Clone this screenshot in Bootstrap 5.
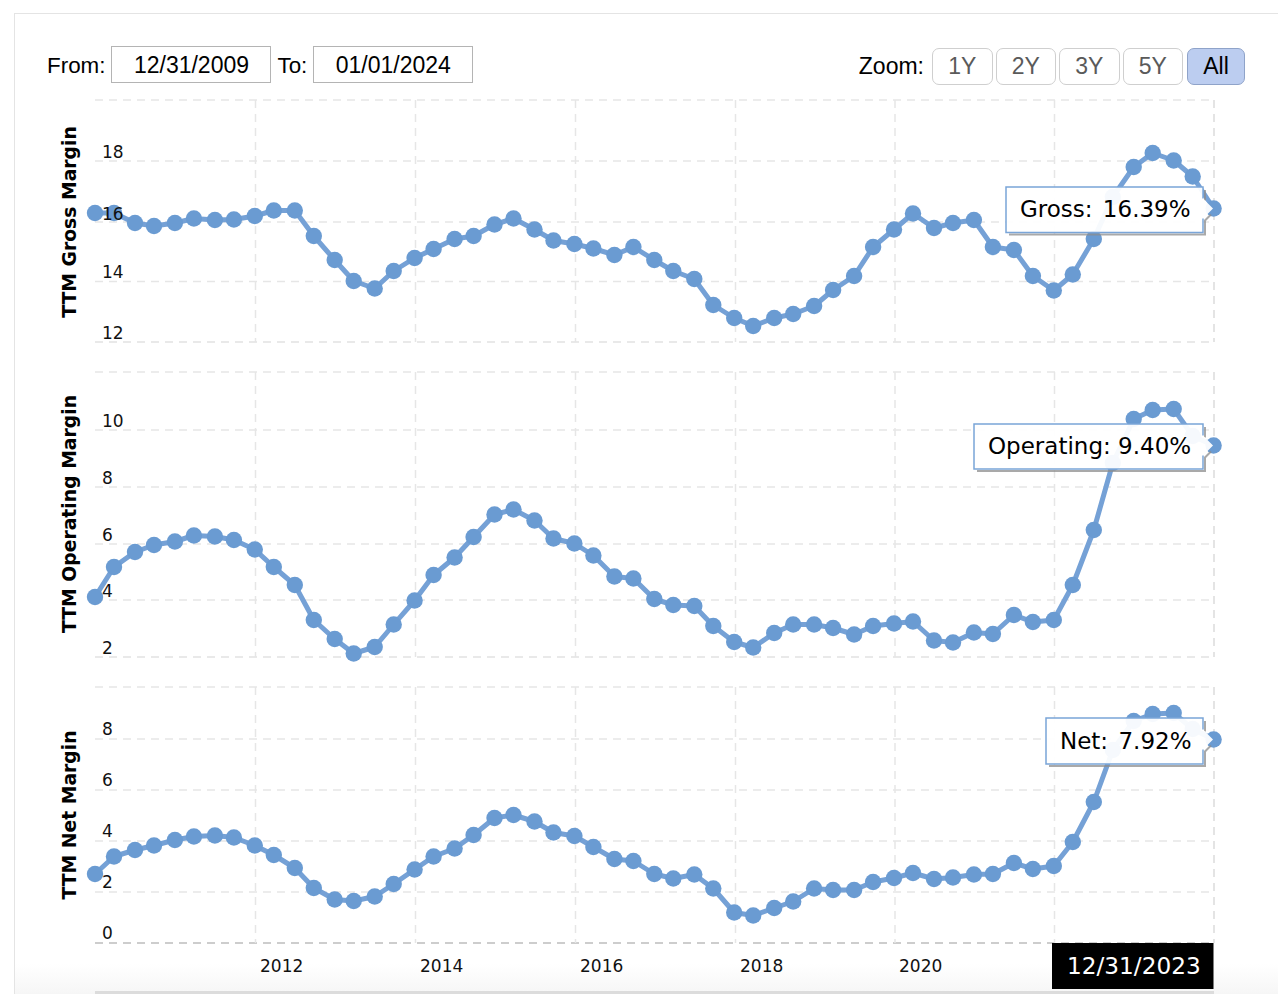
<!DOCTYPE html>
<html lang="en">
<head>
<meta charset="utf-8">
<title>TTM Margins</title>
<link href="https://cdn.jsdelivr.net/npm/bootstrap@5.3.0/dist/css/bootstrap.min.css" rel="stylesheet">
<style>
html, body { height: 994px; overflow: hidden; background: #fff; }
.frame-box { margin: 13px 0 0 14px; border-top: 1px solid #e4e4e4; border-left: 1px solid #e4e4e4; }
.range-bar { padding: 32px 33px 0 32px; height: 74px; font-family: "Liberation Sans", Arial, sans-serif; font-size: 22.4px; color: #000; line-height: 1; }
.range-group { gap: 6px; }
.range-group label { padding-top: 3px; }
.range-input.form-control { width: 160px; height: 37px; padding: 2px 0 0; border: 1px solid #b4b4b4; border-radius: 0; text-align: center; font-size: 23px; color: #000; box-shadow: none; }
.zoom-group { gap: 3px; padding-top: 2px; }
.zoom-label { margin-right: 5px; font-size: 23px; }
.zoom-btn.btn { width: 60.5px; height: 37px; padding: 0; border: 1px solid #cfcfcf; border-radius: 7px; font-size: 23px; line-height: 1; color: #5a5a5a; background: #fff; }
.zoom-btn.btn.active { width: 58px; background: #bccdf0; border-color: #8fa3c9; color: #000; margin-left: 1px; }
.chart-svg { display: block; }
.ax { font-family: "DejaVu Sans", sans-serif; font-size: 17px; fill: #111; }
.ax-title { font-family: "DejaVu Sans", sans-serif; font-size: 18.8px; font-weight: 700; fill: #000; }
.tip-text { font-family: "DejaVu Sans", sans-serif; font-size: 23px; fill: #000; }
.tag-text { font-family: "DejaVu Sans", sans-serif; font-size: 23.2px; fill: #fff; }
</style>
</head>
<body>
<div class="frame-box">
  <div class="range-bar d-flex justify-content-between">
    <div class="range-group d-flex align-items-center align-self-start">
      <label for="fromDate">From:</label>
      <input id="fromDate" class="form-control range-input" value="12/31/2009">
      <label for="toDate">To:</label>
      <input id="toDate" class="form-control range-input" value="01/01/2024">
    </div>
    <div class="zoom-group d-flex align-items-center align-self-start">
      <span class="zoom-label">Zoom:</span>
      <button type="button" class="btn zoom-btn">1Y</button>
      <button type="button" class="btn zoom-btn">2Y</button>
      <button type="button" class="btn zoom-btn">3Y</button>
      <button type="button" class="btn zoom-btn">5Y</button>
      <button type="button" class="btn zoom-btn active">All</button>
    </div>
  </div>
  <svg id="chart" class="chart-svg" width="1263" height="906" viewBox="15 88 1263 906" xmlns="http://www.w3.org/2000/svg"></svg>
</div>
<script>
var gross=[213,213,223,226,223,218.5,220,219.5,216,210.5,210.5,236,260,281,288.5,271,258,249,239,236,224.5,218.5,229.5,240.5,244,248.5,255,247,260,271,279,305,318,326,318,314,306,290,276,247,229.5,213.5,228,223,220,247,250,276,290.5,274.5,239,197,167,153,160.5,176.5,208.5];
var oper=[597,567,552,545,541.5,535.5,536.5,540,549.5,567,585,620,639,653.5,647,624.5,600.5,575,557.5,537,514.5,509.5,520.5,538.5,543.5,555.5,576.5,578.5,599,605,606,626,642,647.5,633,624.5,624.5,628,634.5,626,623.5,621.5,640.5,642.5,632.5,634,615,622,620,585,530,463,419,410,409,436,445.5];
var net=[874,856.5,850,845.5,840,836.5,835.5,837.5,845.5,855,868,888,899.5,901,896.5,884,869.5,856.5,848.5,835,818,815,821.5,832.5,836,847,859,861,874,878.5,874.5,888.5,912.5,915.5,908,901.5,888.5,890,890,882,878,873,879,877.5,874.5,874,863,869,866,842,802,750,721,714,713,729,739.5];
var off=[0,19,40,59];
function xAt(i){return Math.min(1214,95+Math.floor(i/4)*79.9+off[i%4]);}
var vticks=[255.5,415.5,575.5,735.5,895,1054.5];
var panels=[
 {top:100,bot:342,lines:[161,222,281.5],labels:[[18,157.5],[16,219.5],[14,277.5],[12,338.5]],title:"TTM Gross Margin",ty:222,data:gross,tip:"Gross: 16.39%",ws:3,tl:1006,tt:187,tr:1203,tb:232.5,tipY:208.5,tx:1020,base:217},
 {top:372,bot:657,lines:[430,487,544,600],labels:[[10,426.5],[8,483.5],[6,540.5],[4,596.5],[2,653.5]],title:"TTM Operating Margin",ty:514,data:oper,tip:"Operating: 9.40%",ws:0,tl:974,tt:424,tr:1203,tb:469,tipY:445.5,tx:988,base:454},
 {top:687,bot:943,lines:[739,790,841,892],labels:[[8,735],[6,786],[4,837],[2,888],[0,939]],title:"TTM Net Margin",ty:815,data:net,tip:"Net: 7.92%",ws:3,tl:1046,tt:718,tr:1203,tb:764,tipY:739.5,tx:1060,base:749}
];
var h='<defs><linearGradient id="fade" x1="0" y1="0" x2="0" y2="1"><stop offset="0" stop-color="#fff"/><stop offset="1" stop-color="#f6f6f6"/></linearGradient></defs>';
h+='<rect x="15" y="964" width="1263" height="30" fill="url(#fade)"/>';
panels.forEach(function(p,pi){
  var g='#e6e6e6';
  p.lines.concat([p.top]).forEach(function(y){h+='<line x1="95" x2="1214" y1="'+y+'" y2="'+y+'" stroke="'+g+'" stroke-width="1.5" stroke-dasharray="8 6"/>';});
  h+='<line x1="95" x2="1214" y1="'+p.bot+'" y2="'+p.bot+'" stroke="'+(pi==2?'#bdbdbd':'#e2e2e2')+'" stroke-width="1.5" stroke-dasharray="8 6"/>';
  vticks.forEach(function(x){h+='<line x1="'+x+'" x2="'+x+'" y1="'+p.top+'" y2="'+p.bot+'" stroke="'+g+'" stroke-width="1.5" stroke-dasharray="8 6"/>';});
  h+='<line x1="1214" x2="1214" y1="'+p.top+'" y2="'+p.bot+'" stroke="#dcdcdc" stroke-width="1.5" stroke-dasharray="8 6"/>';
  var pts=p.data.map(function(y,i){return xAt(i).toFixed(1)+','+y;}).join(' ');
  h+='<polyline points="'+pts+'" fill="none" stroke="#75a1d6" stroke-width="5" stroke-linejoin="round"/>';
  p.data.forEach(function(y,i){h+='<circle cx="'+xAt(i).toFixed(1)+'" cy="'+y+'" r="8.2" fill="#6a9bd2"/>';});
  p.labels.forEach(function(l){h+='<text class="ax" x="102" y="'+l[1]+'">'+l[0]+'</text>';});
  h+='<text class="ax-title" text-anchor="middle" transform="translate(75.5,'+p.ty+') rotate(-90)">'+p.title+'</text>';
  var m=p.tipY;
  var fillD='M'+p.tl+' '+p.tt+'H'+p.tr+'V'+(m-10)+'L1213 '+m+'L'+p.tr+' '+(m+10)+'V'+p.tb+'H'+p.tl+'Z';
  var shadow='M'+(p.tr+2)+' '+(p.tt+3)+'V'+(m-8)+'M'+(p.tr+8)+' '+(m+6)+'L'+(p.tr+2)+' '+(m+12)+'V'+(p.tb+2)+'H'+(p.tl+3);
  var border='M'+p.tr+' '+(m-10)+'V'+p.tt+'H'+p.tl+'V'+p.tb+'H'+p.tr+'V'+(m+10);
  h+='<path d="'+shadow+'" fill="none" stroke="#8c8c8c" stroke-width="2" opacity=".75"/>';
  h+='<path d="'+fillD+'" fill="#fff" fill-opacity=".94"/>';
  h+='<path d="'+border+'" fill="none" stroke="#7aa5d8" stroke-width="1.5"/>';
  h+='<text class="tip-text" x="'+p.tx+'" y="'+p.base+'" word-spacing="'+p.ws+'">'+p.tip+'</text>';
});
[[2012,260],[2014,420],[2016,580],[2018,740],[2020,899]].forEach(function(t){h+='<text class="ax" x="'+t[1]+'" y="972">'+t[0]+'</text>';});
h+='<rect x="1052" y="943" width="161.5" height="46" fill="#000"/>';
h+='<text class="tag-text" x="1067" y="974">12/31/2023</text>';
h+='<rect x="95" y="991" width="1119" height="3" fill="#dcdcdc"/>';
document.getElementById('chart').innerHTML=h;
</script>
<script src="https://cdn.jsdelivr.net/npm/bootstrap@5.3.0/dist/js/bootstrap.bundle.min.js"></script>
</body>
</html>
